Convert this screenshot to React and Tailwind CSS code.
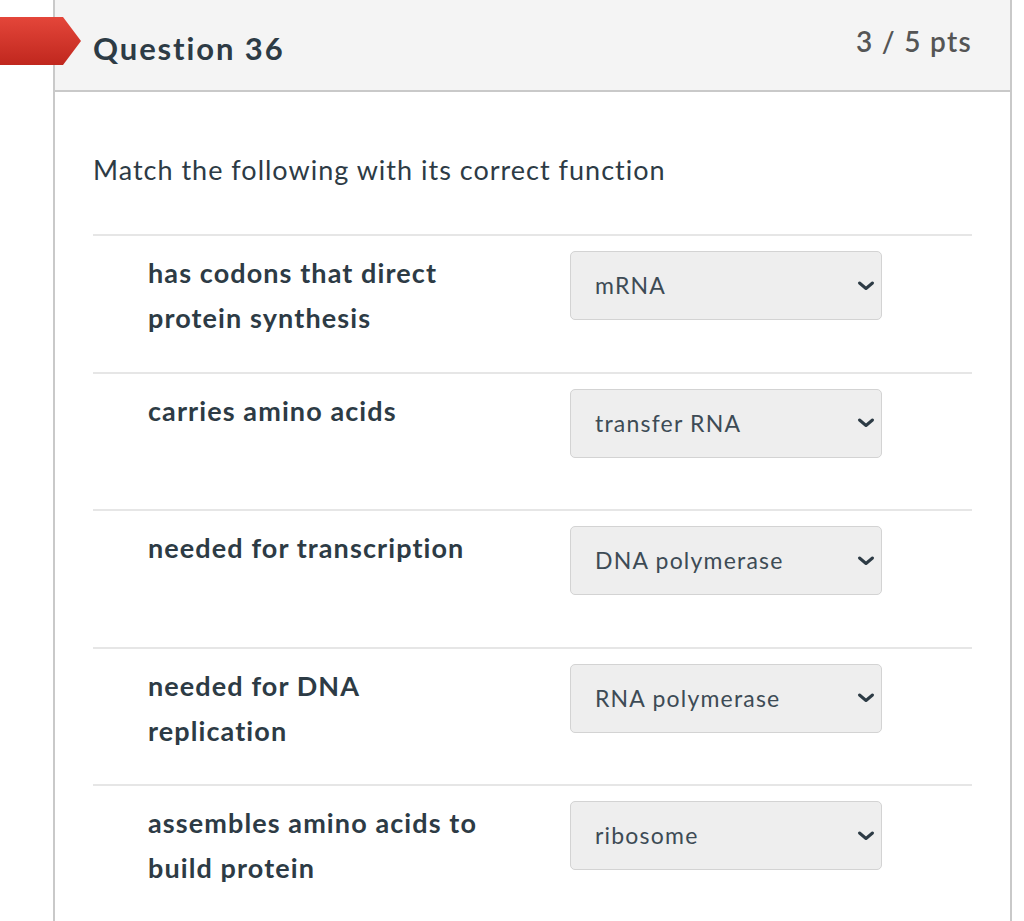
const rows = [
    { label: 'has codons that direct protein synthesis', value: 'mRNA' },
    { label: 'carries amino acids', value: 'transfer RNA' },
    { label: 'needed for transcription', value: 'DNA polymerase' },
    { label: 'needed for DNA replication', value: 'RNA polymerase' },
    { label: 'assembles amino acids to build protein', value: 'ribosome' },
]

function MatchSelect({ value }) {
    return (
        <div className="w-[312px] h-[69px] bg-[#eeeeee] border-[1.5px] border-[#d3d3d3] rounded-[5px] flex items-center justify-between pl-[24px] pr-[6px]">
            <span className="text-[23px] tracking-[1.2px] text-[#3d4b55]">{value}</span>
            <svg width="18" height="12" viewBox="0 0 18 12" className="text-[#2d3b45]">
                <polyline points="2.5,3 9,8.5 15.5,3" fill="none" stroke="currentColor" strokeWidth="3" strokeLinecap="round" strokeLinejoin="round" />
            </svg>
        </div>
    )
}

export default function App() {
    return (
        <div className="relative min-h-[921px] bg-white font-['Lato','Noto_Sans',sans-serif] text-[#2d3b45] overflow-hidden">
            {/* red marker flag */}
            <svg className="absolute left-0 top-[17px]" width="82" height="49" viewBox="0 0 82 49">
                <defs>
                    <linearGradient id="flag" x1="0" y1="0" x2="0" y2="1">
                        <stop offset="0" stopColor="#e4463a" />
                        <stop offset="1" stopColor="#c0271e" />
                    </linearGradient>
                </defs>
                <polygon points="0,0 63,0 81,24 63,48 0,48" fill="url(#flag)" />
            </svg>

            <div className="ml-[53px] w-[959px] min-h-[921px] border-x-2 border-[#c9c9c9]">
                {/* header */}
                <div className="h-[92px] bg-[#f4f4f4] border-b-2 border-[#c9c9c9] flex justify-between pl-[38px] pr-[38px]">
                    <h2 className="text-[31px] font-bold tracking-[1.9px] leading-none pt-[33px] text-[#2d3b45]">Question 36</h2>
                    <div className="text-[28px] tracking-[1.3px] leading-none pt-[27px] text-[#555555] font-semibold">3 / 5 pts</div>
                </div>

                {/* body */}
                <div className="px-[38px]">
                    <p className="text-[27px] tracking-[1px] leading-[40px] pt-[58px] pb-[44px]">Match the following with its correct function</p>
                    <div>
                        {rows.map((r) => (
                            <div key={r.value} className="h-[137.5px] border-t-2 border-[#e6e6e6] flex pt-[14px] pl-[55px]">
                                <div className="w-[422px] pr-[82px] text-[27px] tracking-[1.1px] font-bold leading-[45px]">{r.label}</div>
                                <div className="pt-[1px]">
                                    <MatchSelect value={r.value} />
                                </div>
                            </div>
                        ))}
                    </div>
                </div>
            </div>
        </div>
    )
}
